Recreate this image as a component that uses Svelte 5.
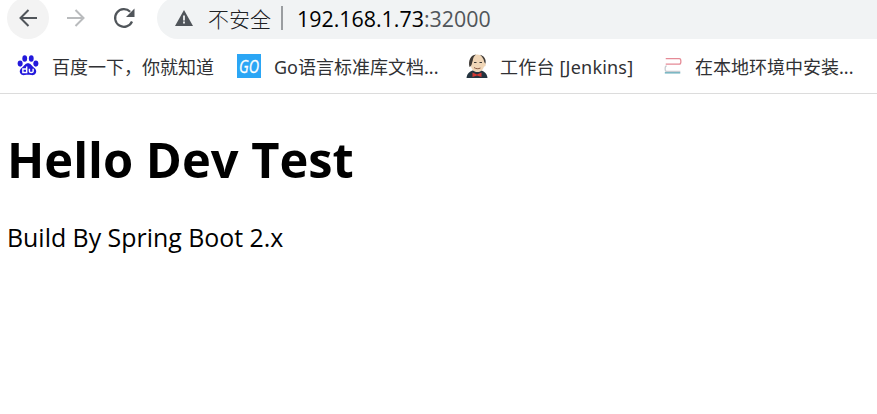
<script>
  const bookmarks = [
    { icon: 'baidu', label: '百度一下，你就知道' },
    { icon: 'go', label: 'Go语言标准库文档...' },
    { icon: 'jenkins', label: '工作台 [Jenkins]' },
    { icon: 'stack', label: '在本地环境中安装...' }
  ];
</script>

<div class="browser">
  <header class="toolbar">
    <div class="nav">
      <button class="nav-btn hover" aria-label="back">
        <svg width="24" height="24" viewBox="0 0 24 24"><path d="M21 12H5M12.500 4 4.500 12l8 8" fill="none" stroke="#50555a" stroke-width="2"/></svg>
      </button>
      <button class="nav-btn" aria-label="forward">
        <svg width="24" height="24" viewBox="0 0 24 24"><path d="M3 12H19M11.500 4l8 8-8 8" fill="none" stroke="#b9bbbd" stroke-width="2"/></svg>
      </button>
      <button class="nav-btn" aria-label="reload">
        <svg width="24" height="24" viewBox="0 0 24 24"><path d="M20 15.500A8.800 8.800 0 1 1 18.200 5.800" fill="none" stroke="#50555a" stroke-width="2.200"/><path d="M22.500 2.500V11h-8.500z" fill="#50555a"/></svg>
      </button>
    </div>
    <div class="omnibox">
      <svg class="warn" width="18" height="16" viewBox="0 0 18 16"><path d="M9 0 18 16H0z" fill="#50555a"/><path d="M8.100 5.500h1.800v5H8.100zM8.100 11.600h1.800v1.800H8.100z" fill="#f1f3f4"/></svg>
      <span class="insecure">不安全</span>
      <span class="sep"></span>
      <span class="url">192.168.1.73<span class="port">:32000</span></span>
    </div>
  </header>

  <nav class="bookmarks">
    {#each bookmarks as b}
      <div class="bookmark">
        <span class="favicon">
          {#if b.icon === 'baidu'}
            <svg width="24" height="24" viewBox="0 0 22 22">
              <g fill="#2319dc">
                <ellipse cx="3.800" cy="8.800" rx="2.300" ry="2.800"/>
                <ellipse cx="8" cy="4.200" rx="2.200" ry="3"/>
                <ellipse cx="14" cy="4.200" rx="2.200" ry="3"/>
                <ellipse cx="18.200" cy="8.800" rx="2.300" ry="2.800"/>
                <path d="M11 8.500c2.500 0 3.200 2.200 5.300 3.800 2.200 1.600 2.700 3.500 1.900 5.100-.9 1.900-3 2.200-4.300 1.900-1.900-.3-3.900-.3-5.800 0-1.300.3-3.400 0-4.300-1.900-.8-1.600-.3-3.500 1.900-5.100 2.100-1.600 2.800-3.800 5.300-3.800z"/>
              </g>
              <path d="M9.800 11.500v5.500H6.300v-3.200h3.500M12.300 13.500v2.600c0 1.200 3.400 1.200 3.400 0v-2.600" fill="none" stroke="#fff" stroke-width="1.300"/>
            </svg>
          {:else if b.icon === 'go'}
            <svg width="24" height="24" viewBox="0 0 24 24">
              <rect width="24" height="24" fill="#2ba6f5"/>
              <text x="12" y="19" class="go-text" textLength="20" lengthAdjust="spacingAndGlyphs">GO</text>
            </svg>
          {:else if b.icon === 'jenkins'}
            <svg width="24" height="24" viewBox="0 0 24 24">
              <path d="M1.500 24c.5-4.500 3-6.500 6-7.500h9c3 1 5.500 3 6 7.500z" fill="#24343f"/>
              <path d="M5 10c-1-6 2.500-9.500 7-9.500s8.500 3 8 8.500c1.500 1 .7 4-1 3.500-.8 3.500-3.500 5.500-6.500 5.500S6.800 16 6 12.500C5.300 12 5 11 5 10z" fill="#f0d6b7"/>
              <path d="M4.500 13C3 7 5.500 1 11 .5 8.500 2.500 8 4.500 7.700 7c-.8 1-.5 5-3.200 6zM15 .8c4 1 6.500 4.500 5.500 9-1-.5-1.500-3-2-4.500C17.500 3.500 16.500 2.200 15 .8z" fill="#3f3a36"/>
              <path d="M9 8.500h2.500M14.500 8.500h2.500" stroke="#3f3a36" stroke-width="1.200"/>
              <path d="M9 13.500c2 1.500 4.500 1.500 6.500.5" fill="none" stroke="#8a5a44" stroke-width="1"/>
              <path d="M7.500 18.500l4.500 2 4.500-2v4.500l-4.500-1.500L7.500 23z" fill="#d33833"/>
            </svg>
          {:else}
            <svg width="20" height="20" viewBox="0 0 22 20" fill="none">
              <path d="M18 2H3M18 2c2.200 0 2.200 6 0 6H3" stroke="#e58a96" stroke-width="1.400"/>
              <path d="M4 10c-2.200 0-2.200 6 0 6h15" stroke="#c9ccd1" stroke-width="1.400"/>
              <path d="M2 17.500h17" stroke="#6fb0bd" stroke-width="1.600"/>
            </svg>
          {/if}
        </span>
        <span class="label">{b.label}</span>
      </div>
    {/each}
  </nav>

  <main class="page">
    <h1>Hello Dev Test</h1>
    <p>Build By Spring Boot 2.x</p>
  </main>
</div>

<style>
  :global(body) {
    background: #fff;
    font-family: "Open Sans", "Noto Sans", "Noto Sans CJK SC", sans-serif;
    overflow: hidden;
  }
  .browser {
    width: 877px;
    height: 414px;
    overflow: hidden;
  }
  .toolbar {
    display: flex;
    height: 39px;
    overflow: hidden;
  }
  .nav {
    display: flex;
    gap: 6px;
    padding-left: 7px;
    width: 150px;
    box-sizing: border-box;
    flex: none;
  }
  .nav-btn {
    width: 42px;
    height: 42px;
    margin-top: -3px;
    border: 0;
    padding: 0;
    border-radius: 50%;
    background: transparent;
    display: flex;
    align-items: center;
    justify-content: center;
  }
  .nav-btn.hover { background: #f3f3f3; }
  .omnibox {
    flex: 1;
    margin-left: 7px;
    margin-top: -3px;
    margin-right: -40px;
    height: 42px;
    background: #f1f3f4;
    border-radius: 21px;
    display: flex;
    align-items: center;
    padding-left: 18px;
  }
  .warn { flex: none; }
  .insecure {
    margin-left: 15px;
    font-size: 21px;
    color: #202124;
    font-family: "Noto Sans CJK SC", sans-serif;
    font-weight: 300;
  }
  .sep {
    width: 2px;
    height: 24px;
    background: #9a9da0;
    margin: 0 14px 0 10px;
  }
  .url {
    font-size: 21.400px;
    color: #000;
  }
  .port { color: #50555a; }
  .bookmarks {
    display: flex;
    height: 54px;
    border-bottom: 1px solid #dcdcdc;
    align-items: center;
    padding-left: 16px;
  }
  .bookmark {
    display: flex;
    align-items: center;
    color: #303134;
    font-size: 18px;
    font-family: "Noto Sans", "Noto Sans CJK SC", sans-serif;
    white-space: nowrap;
  }
  .bookmark:nth-child(1) { width: 221px; }
  .bookmark:nth-child(2) { width: 228px; }
  .bookmark:nth-child(3) { width: 196px; }
  .bookmark:nth-child(2) .favicon { margin-right: 13px; }
  .bookmark:nth-child(3) .favicon { margin-right: 11px; }
  .bookmark:nth-child(3) .label { letter-spacing: 0.200px; }
  .bookmark:nth-child(4) .favicon { margin-right: 10px; }
  .favicon {
    width: 24px;
    height: 24px;
    margin-right: 12px;
    display: flex;
    align-items: center;
    justify-content: center;
    flex: none;
  }
  .go-text {
    fill: #fff;
    font-family: "Open Sans", sans-serif;
    font-style: italic;
    font-weight: 400;
    font-size: 19px;
    text-anchor: middle;
    stroke: #fff;
    stroke-width: 0.300px;
  }
  .page { padding: 0 7px; }
  h1 {
    margin: 33px 0 0;
    font-size: 48.800px;
    line-height: 65px;
    font-weight: 700;
    color: #000;
  }
  p {
    margin: 29px 0 0;
    font-size: 24.900px;
    line-height: 32px;
    color: #000;
  }
</style>
